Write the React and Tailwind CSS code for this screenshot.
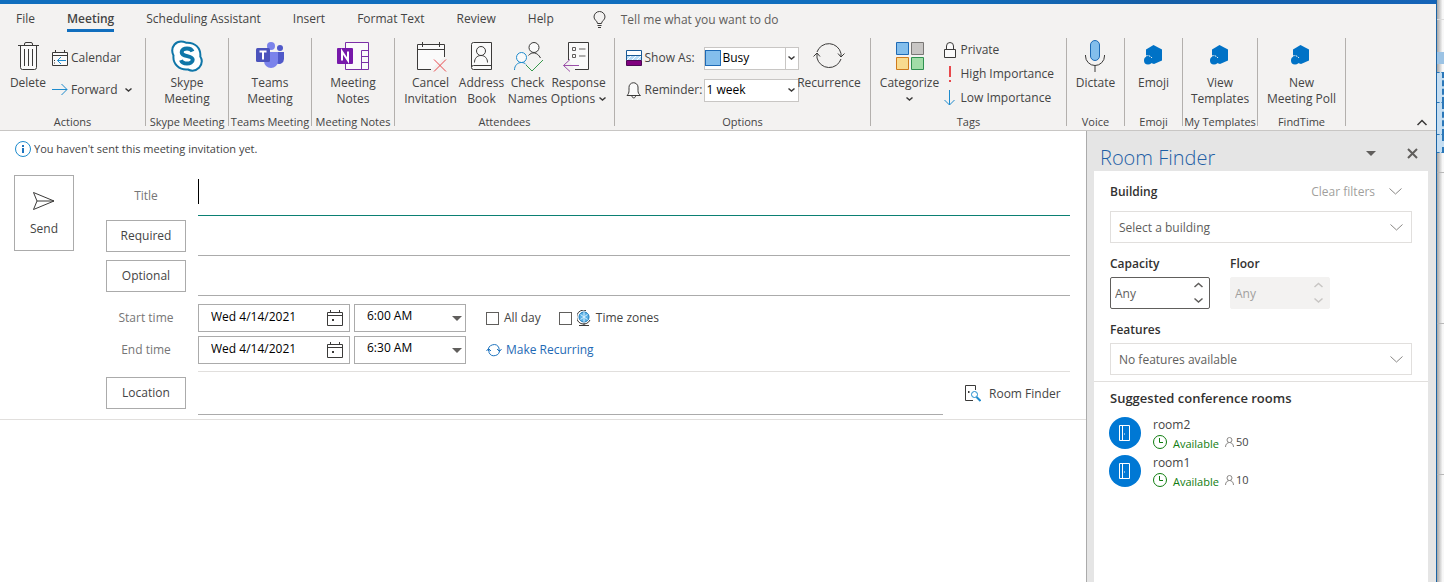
import React, { useState } from "react";

// ---------- icons ----------

function Svg({ w, h, className, children }) {
    return (
        <svg width={w} height={h} viewBox={`0 0 ${w} ${h}`} fill="none" stroke="#3b3a39" className={className} aria-hidden="true">
            {children}
        </svg>
    );
}

const TrashIcon = () => (
    <Svg w={32} h={32}>
        <path d="M8.500 6v21.500a2 2 0 0 0 2 2h12a2 2 0 0 0 2-2V6" fill="#fafafa" />
        <path d="M6 5.500h21M12.500 5V4a1.500 1.500 0 0 1 1.500-1.500h5A1.500 1.500 0 0 1 20.500 4v1M12.500 9v17M16.500 9v17M20.500 9v17" />
    </Svg>
);

const CalendarBackIcon = () => (
    <Svg w={16} h={16}>
        <path d="M.5 2.500h15v13H.5zM.5 5.500h15M3.500 0v3M12.500 0v3" fill="#fafafa" />
        <path d="M2 10.500h1M2 13h1" />
        <path d="M14 10.500H5.500M9 7l-3.500 3.500L9 14" stroke="#1e8bcd" />
    </Svg>
);

const ForwardIcon = () => (
    <Svg w={16} h={16}>
        <path d="M0 7.500h15M9.500 2l5.500 5.500L9.500 13" stroke="#1e8bcd" />
    </Svg>
);

const SkypeIcon = () => (
    <Svg w={32} h={32}>
        <path d="M10 1.500c2 0 3.500.5 5 1.200C24 2 30 8 29.300 16.500c2.500 4 1 8.500-1 11-3 3-7.500 4-11.300 2C8.500 30.500 1.500 24 2.500 15.500.8 12 1 7.500 3.500 4.500 5.300 2.500 7.500 1.500 10 1.500z" stroke="#0f76a8" strokeWidth="2" fill="#fff" />
        <path d="M21.500 11.500c-1-2.500-3-3-5.500-3-3 0-5.300 1.300-5.300 3.700 0 5.300 11 2.600 11 7.500 0 2.600-2.700 3.800-5.700 3.800-2.800 0-5.200-1-6-3.400" stroke="#0f76a8" strokeWidth="4" />
    </Svg>
);

const TeamsIcon = () => (
    <Svg w={32} h={32}>
        <g stroke="none">
            <circle cx="17" cy="6" r="4" fill="#7b83eb" />
            <circle cx="26" cy="8" r="3" fill="#5059c9" />
            <path d="M22 12h8v7a5 5 0 0 1-8 4z" fill="#5059c9" />
            <path d="M10 12h14v9a7 7 0 0 1-14 0z" fill="#7b83eb" />
            <path d="M2 9.500a1.500 1.500 0 0 1 1.500-1.500h11a1.500 1.500 0 0 1 1.500 1.500v11a1.500 1.500 0 0 1-1.500 1.500h-11A1.500 1.500 0 0 1 2 20.500z" fill="#4b53bc" />
        </g>
        <path d="M5.500 11.500h7M9 11.500v8" stroke="#fff" strokeWidth="2" />
    </Svg>
);

const OneNoteIcon = () => (
    <Svg w={32} h={32}>
        <path d="M8.500 2.500h23v27h-23zM24.500 29V10.500h7M24.500 16.500h7M24.500 22.500h7" stroke="#7b2fa6" fill="#fafafa" />
        <path d="M0 9a1 1 0 0 1 1-1h14a1 1 0 0 1 1 1v14a1 1 0 0 1-1 1H1a1 1 0 0 1-1-1z" fill="#7719aa" stroke="none" />
        <path d="M5 20.500v-9l6 9v-9" stroke="#fff" strokeWidth="2" />
    </Svg>
);

const CancelIcon = () => (
    <Svg w={32} h={32}>
        <path d="M16 29.500H2.500v-25h27V17" fill="#fafafa" />
        <path d="M2.500 9.500h27M7.500 2v5M24.500 2v5" />
        <path d="M19 19.500l12 12M31 19.500l-12 12" stroke="#e8484c" />
    </Svg>
);

const AddressBookIcon = () => (
    <Svg w={32} h={32}>
        <path d="M5.500 27V4.500a2 2 0 0 1 2-2h18v27h-18a2 2 0 0 1-2-2 2 2 0 0 1 2-2h18" fill="#fafafa" />
        <circle cx="15" cy="11" r="4.500" />
        <path d="M8.500 22.500c0-4 2.500-7 6.500-7s6.500 3 6.500 7" />
    </Svg>
);

const CheckNamesIcon = () => (
    <Svg w={32} h={32}>
        <circle cx="22" cy="7.500" r="5" fill="#fafafa" />
        <path d="M16.500 15.500c3-4 9-3.500 12 2.500" />
        <circle cx="9.500" cy="17.500" r="5" stroke="#1e8bcd" fill="#fafafa" />
        <path d="M2.500 30c0-4.500 3-7.500 7-7.500 2 0 3.500.7 4.500 2" stroke="#1e8bcd" />
        <path d="M14 25l6 6 11-11" stroke="#379a4d" />
    </Svg>
);

const ResponseIcon = () => (
    <Svg w={32} h={32}>
        <path d="M5.500 20V2.500h20v27H12" fill="#fafafa" />
        <path d="M9.500 7.500h3v3h-3zM9.500 14.500h3v3h-3zM16 9h6.500M16 16h6.500" stroke="#605e5c" />
        <path d="M16 25.500H.5M7 19.500l-6.500 6 6.500 6" stroke="#9a4fa8" />
    </Svg>
);

const ShowAsIcon = () => (
    <Svg w={16} h={16}>
        <path d="M.5.5h15v15H.5z" fill="#fff" stroke="none" />
        <path d="M0 5h16v6H0z" fill="#b9dcf6" stroke="none" />
        <path d="M1 10l4-4M6 10l4-4M11 10l4-4" stroke="#fff" />
        <path d="M.5 10V.5h15V10M0 5.500h16" stroke="#1a5a96" />
        <path d="M.5 10.500h15v5H.5z" fill="#80007f" stroke="#4b0a55" />
    </Svg>
);

const BellIcon = () => (
    <Svg w={16} h={18}>
        <path d="M1 14.500c1.500-1.500 2-3 2-5V6.500a4.500 4.500 0 0 1 9-.5v3.500c0 2 .5 3.500 2.500 5zM6 15c0 2.500 3.500 2.500 3.500 0" fill="#fafafa" />
    </Svg>
);

const RecurrenceIcon = () => (
    <Svg w={32} h={32}>
        <path d="M4 12a12.500 12.500 0 0 1 24 1.500V17M28 19A12.500 12.500 0 0 1 4 18v-5M.5 16.500L4 13l3 3.500M25 13.500l3 3.500 3.500-3.500" />
    </Svg>
);

const CategorizeIcon = () => (
    <Svg w={32} h={32}>
        <path d="M2.500 2.500h12v12h-12z" fill="#83beec" stroke="#1e6ab5" />
        <path d="M17.500 2.500h12v12h-12z" fill="#c8c6c4" stroke="#797775" />
        <path d="M2.500 17.500h12v12h-12z" fill="#f8db8f" stroke="#cf7a1c" />
        <path d="M17.500 17.500h12v12h-12z" fill="#a1dda7" stroke="#2f9150" />
    </Svg>
);

const LockIcon = () => (
    <Svg w={14} h={16}>
        <path d="M1.500 7.500h11v8h-11zM3.500 7V4a3.500 3.500 0 0 1 7 0v3" fill="#fafafa" />
    </Svg>
);

const HighIcon = () => (
    <Svg w={14} h={16}>
        <path d="M7 0v11M7 14v2" stroke="#e8484c" strokeWidth="2" />
    </Svg>
);

const LowIcon = () => (
    <Svg w={14} h={16}>
        <path d="M6.500 0v15M1.500 10l5 5 5-5" stroke="#1e8bcd" />
    </Svg>
);

const MicIcon = () => (
    <Svg w={32} h={32}>
        <rect x="11.500" y=".5" width="9" height="20" rx="4.500" fill="#83beec" stroke="#1e6ab5" />
        <path d="M6.500 15v1a9.500 9.500 0 0 0 19 0v-1M16 25.500V32" />
    </Svg>
);

const AddinIcon = () => (
    <Svg w={32} h={32}>
        <path d="M15.500 5l8.500 4.500v11L16 24l-3-1-5-5V9.500z" fill="#0072c6" stroke="none" />
        <circle cx="10" cy="20.500" r="4" fill="#0072c6" stroke="none" />
        <path d="M6 20a4 3 0 0 1 3-1" fill="#0072c6" stroke="none" />
        <path d="M7.500 16c3-1 5 0 6.500 2" stroke="#f3f2f1" strokeDasharray="2 1" />
    </Svg>
);

const BulbIcon = () => (
    <Svg w={14} h={18}>
        <path d="M4.500 12.500c0-2.500-3.500-3.500-3.500-6.500a5.500 5.500 0 0 1 11 0c0 3-3.500 4-3.500 6.500zM4.500 14.500h4M5 16.500h3" />
    </Svg>
);

const SendIcon = () => (
    <Svg w={24} h={20}>
        <path d="M1.500 1.500l20.500 8.500-20.500 8.500L5 10zM5 10h17" />
    </Svg>
);

const DateIcon = () => (
    <Svg w={16} h={16}>
        <path d="M.5 2.500h15v13H.5zM.5 5.500h15M3.500 0v3M12.500 0v3" />
        <path d="M5 10h2" strokeWidth="2" />
    </Svg>
);

const GlobeIcon = () => (
    <Svg w={14} h={16}>
        <circle cx="7" cy="7" r="5" fill="#5db3e8" stroke="#1b78b8" />
        <path d="M3.500 4.500l7 5M3.500 9.500l7-5M7 2v10" stroke="#d7effc" />
        <path d="M9 .5a7 7 0 1 0 4 9.500M7 13v2.500M2 15.500h10" />
    </Svg>
);

const RecurSmallIcon = () => (
    <Svg w={16} h={14}>
        <path d="M2.500 8A5.500 5.500 0 0 1 13 5v2.500M13.500 7A5.500 5.500 0 0 1 3 9.500V6.500M.5 8l2-2.500L5 8M11 6l2.500 2.500L15.500 6" stroke="#1e73be" />
    </Svg>
);

const FinderIcon = () => (
    <Svg w={16} h={17}>
        <path d="M8 15.500H.5V.5h10V5" />
        <path d="M3 7h1.500" strokeWidth="2" />
        <circle cx="9.500" cy="9.500" r="3" stroke="#1e8bcd" />
        <path d="M11.500 12l4 4" stroke="#1e8bcd" strokeWidth="2" />
    </Svg>
);

const InfoIcon = () => (
    <Svg w={16} h={16}>
        <circle cx="8" cy="8" r="7.500" stroke="#1e8bcd" />
        <path d="M8 4v2M8 7v5" stroke="#1e73be" strokeWidth="2" />
    </Svg>
);

const DoorIcon = () => (
    <Svg w={12} h={16}>
        <path d="M.5.5h10v15H.5zM3.500 1v14M5 9h1" stroke="#fff" />
    </Svg>
);

const ClockIcon = () => (
    <Svg w={14} h={14}>
        <path d="M7 .5a6.500 6.500 0 1 0 0 13 6.500 6.500 0 0 0 0-13zM6.500 3v4.500H10" stroke="#107c10" />
    </Svg>
);

const PersonIcon = () => (
    <Svg w={9} h={10}>
        <path d="M4.500.5a2.500 2.500 0 1 0 0 5 2.500 2.500 0 0 0 0-5zM.5 10c0-6 8-6 8 0" stroke="#8a8886" />
    </Svg>
);

function Chevron({ w = 7, h = 3, up, color = "#3b3a39", strokeWidth = 1.5 }) {
    return (
        <svg width={w} height={h + 1} viewBox={`0 0 ${w} ${h + 1}`} fill="none" stroke={color} strokeWidth={strokeWidth} className="overflow-visible" aria-hidden="true">
            <path d={up ? `M.5 ${h}L${w / 2} .5 ${w - 0.5} ${h}` : `M.5 .5L${w / 2} ${h} ${w - 0.5} .5`} />
        </svg>
    );
}

const Triangle = () => (
    <svg width="10" height="5" viewBox="0 0 10 5" fill="#605e5c" aria-hidden="true">
        <path d="M0 0h10L5 5z" />
    </svg>
);

// ---------- ribbon ----------

const tabs = ["File", "Meeting", "Scheduling Assistant", "Insert", "Format Text", "Review", "Help"];

function Tabs() {
    const [active, setActive] = useState("Meeting");

    return (
        <nav className="flex h-[34px] items-start gap-8 pl-4 text-[12px] text-[#444444]">
            {tabs.map((tab) => (
                <button
                    key={tab}
                    onClick={() => setActive(tab)}
                    className={`h-[28px] border-b-[3px] pt-[5px] leading-5 whitespace-nowrap ${tab === active ? "border-[#106ebe] font-semibold" : "border-transparent"}`}
                >
                    {tab}
                </button>
            ))}
            <button className="ml-[7px] flex h-[31px] items-center gap-[14px] whitespace-nowrap text-[#5f5d5b]">
                <BulbIcon />
                Tell me what you want to do
            </button>
        </nav>
    );
}

function Group({ name, className, children }) {
    return (
        <section aria-label={name} className={`flex h-[88px] shrink-0 flex-col border-r border-[#b3b0ad] ${className}`}>
            <div className="flex flex-1 justify-center">{children}</div>
            <div className="text-center text-[11px] leading-2 whitespace-nowrap">{name}</div>
        </section>
    );
}

function BigButton({ icon, lines, arrow, className = "" }) {
    return (
        <button className={`flex flex-col items-center self-start pt-[2px] leading-4 whitespace-nowrap ${className}`}>
            {icon}
            <span className="mt-[3px]">{lines[0]}</span>
            <span className="flex h-4 items-center gap-1">
                {lines[1]}
                {arrow && <Chevron />}
            </span>
        </button>
    );
}

function TagButton({ icon, text }) {
    return (
        <button className="flex h-6 items-center gap-1 whitespace-nowrap">
            {icon}
            {text}
        </button>
    );
}

function Ribbon() {
    return (
        <div className="flex h-[93px] items-start border-b border-[#c8c6c4] text-[12px] text-[#444444]">
            <Group name="Actions" className="w-[146px]">
                <BigButton icon={<TrashIcon />} lines={["Delete"]} className="w-[42px]" />
                <div className="flex w-[89px] flex-col pt-1 pl-[3px]">
                    <button className="flex h-8 items-center gap-[3px]">
                        <CalendarBackIcon />
                        Calendar
                    </button>
                    <button className="flex h-8 items-center gap-[3px]">
                        <ForwardIcon />
                        Forward
                        <span className="ml-1"><Chevron /></span>
                    </button>
                </div>
            </Group>
            <Group name="Skype Meeting" className="w-[83px]">
                <BigButton icon={<SkypeIcon />} lines={["Skype", "Meeting"]} />
            </Group>
            <Group name="Teams Meeting" className="w-[83px]">
                <BigButton icon={<TeamsIcon />} lines={["Teams", "Meeting"]} />
            </Group>
            <Group name="Meeting Notes" className="w-[83px]">
                <BigButton icon={<OneNoteIcon />} lines={["Meeting", "Notes"]} />
            </Group>
            <Group name="Attendees" className="w-[220px]">
                <BigButton icon={<CancelIcon />} lines={["Cancel", "Invitation"]} className="w-14" />
                <BigButton icon={<AddressBookIcon />} lines={["Address", "Book"]} className="w-[46px]" />
                <BigButton icon={<CheckNamesIcon />} lines={["Check", "Names"]} className="w-[46px]" />
                <BigButton icon={<ResponseIcon />} lines={["Response", "Options"]} arrow className="w-14" />
            </Group>
            <Group name="Options" className="w-[256px]">
                <div className="flex flex-col gap-2 pt-2">
                    <div className="flex h-6 items-center">
                        <label htmlFor="show-as" className="flex w-[78px] items-center gap-[3px] whitespace-nowrap">
                            <ShowAsIcon />
                            Show As:
                        </label>
                        <div className="flex h-[23px] w-[95px] items-center border border-[#c8c6c4] bg-white">
                            <span className="h-4 w-4 shrink-0 border border-[#1e6ab5] bg-[#83beec]" />
                            <select id="show-as" className="h-full w-[64px] appearance-none pl-[2px] text-black">
                                <option>Busy</option>
                                <option>Free</option>
                                <option>Tentative</option>
                            </select>
                            <span className="flex h-full flex-1 items-center justify-center border-l border-[#c8c6c4]">
                                <Chevron />
                            </span>
                        </div>
                    </div>
                    <div className="flex h-6 items-center">
                        <label htmlFor="reminder" className="flex w-[78px] items-center gap-[3px] whitespace-nowrap">
                            <BellIcon />
                            Reminder:
                        </label>
                        <div className="flex h-[23px] w-[95px] items-center border border-[#c8c6c4] bg-white">
                            <select id="reminder" className="h-full w-[80px] appearance-none pl-[2px] text-black">
                                <option>1 week</option>
                                <option>1 day</option>
                                <option>15 minutes</option>
                            </select>
                            <span className="flex flex-1 items-center justify-center">
                                <Chevron />
                            </span>
                        </div>
                    </div>
                </div>
                <BigButton icon={<RecurrenceIcon />} lines={["Recurrence"]} className="w-[61px]" />
            </Group>
            <Group name="Tags" className="w-[196px]">
                <BigButton icon={<CategorizeIcon />} lines={["Categorize"]} arrow className="w-[66px]" />
                <div className="flex w-[118px] flex-col">
                    <TagButton icon={<LockIcon />} text="Private" />
                    <TagButton icon={<HighIcon />} text="High Importance" />
                    <TagButton icon={<LowIcon />} text="Low Importance" />
                </div>
            </Group>
            <Group name="Voice" className="w-[58px]">
                <BigButton icon={<MicIcon />} lines={["Dictate"]} />
            </Group>
            <Group name="Emoji" className="w-[58px]">
                <BigButton icon={<AddinIcon />} lines={["Emoji"]} />
            </Group>
            <Group name="My Templates" className="w-[75px]">
                <BigButton icon={<AddinIcon />} lines={["View", "Templates"]} />
            </Group>
            <Group name="FindTime" className="w-[88px]">
                <BigButton icon={<AddinIcon />} lines={["New", "Meeting Poll"]} />
            </Group>
            <button aria-label="Collapse the ribbon" className="mr-[9px] mb-1 ml-auto self-end">
                <Chevron w={10} h={5} up />
            </button>
        </div>
    );
}

// ---------- meeting form ----------

const boxButton = "h-8 w-20 border border-[#ababab] text-[#444444]";

function TimeRow({ id, label, time, children }) {
    return (
        <div className="flex h-7 items-center gap-3">
            <label htmlFor={id} className="w-20 text-center text-[#767676]">{label}</label>
            <div className="flex h-full items-center gap-1">
                <div className="flex h-full w-[152px] items-center justify-between border border-[#ababab] pr-[6px] pl-3">
                    <input id={id} defaultValue="Wed 4/14/2021" className="h-full w-[100px] pb-1 text-black outline-none" />
                    <button aria-label={`Pick ${label.toLowerCase()}`}><DateIcon /></button>
                </div>
                <div className="flex h-full w-[112px] items-center border border-[#ababab] pr-[3px] pl-3">
                    <select aria-label={label} className="h-full flex-1 appearance-none pb-1 text-black outline-none">
                        <option>{time}</option>
                    </select>
                    <Triangle />
                </div>
            </div>
            <div className="flex items-center pl-2 text-[#444444]">{children}</div>
        </div>
    );
}

function Check({ id, children }) {
    return (
        <div className="flex items-center gap-[5px]">
            <input id={id} type="checkbox" className="h-[13px] w-[13px] appearance-none border border-[#605e5c] bg-white checked:bg-[#106ebe]" />
            <label htmlFor={id} className="flex items-center gap-[5px]">{children}</label>
        </div>
    );
}

function MeetingForm() {
    return (
        <main className="min-w-0 flex-1 bg-white text-[12px]">
            <div className="flex h-[44px] items-start gap-[3px] pt-[10px] pl-[15px] text-[11px] leading-4 text-[#444444]">
                <InfoIcon />
                You haven't sent this meeting invitation yet.
            </div>
            <form className="flex items-start gap-8 border-b border-[#e1dfdd] pr-4 pb-1 pl-[14px]" onSubmit={(e) => e.preventDefault()}>
                <button className="flex h-[76px] w-[60px] flex-col items-center justify-center gap-2 border border-[#ababab] pt-1 leading-5 text-[#444444]">
                    <SendIcon />
                    Send
                </button>
                <div className="flex-1">
                    <div className="flex h-[41px] gap-3">
                        <label htmlFor="title" className="w-20 text-center leading-[41px] text-[#767676]">Title</label>
                        <div className="flex flex-1 border-b border-[#0b8073]">
                            <span className="mt-1 h-[25px] w-px bg-black" />
                            <input id="title" className="flex-1 outline-none" />
                        </div>
                    </div>
                    <div className="flex h-10 items-center gap-3">
                        <button type="button" className={boxButton}>Required</button>
                        <input aria-label="Required" className="h-full flex-1 border-b border-[#ababab] outline-none" />
                    </div>
                    <div className="flex h-10 items-center gap-3">
                        <button type="button" className={boxButton}>Optional</button>
                        <input aria-label="Optional" className="h-full flex-1 border-b border-[#ababab] outline-none" />
                    </div>
                    <div className="flex flex-col gap-1 pt-2 pb-[7px]">
                        <TimeRow id="start" label="Start time" time="6:00 AM">
                            <Check id="all-day">All day</Check>
                            <div className="ml-[18px]">
                                <Check id="zones">
                                    <GlobeIcon />
                                    Time zones
                                </Check>
                            </div>
                        </TimeRow>
                        <TimeRow id="end" label="End time" time="6:30 AM">
                            <a href="#recurring" className="flex items-center gap-1 text-[#1e6ab5]">
                                <RecurSmallIcon />
                                Make Recurring
                            </a>
                        </TimeRow>
                    </div>
                    <div className="flex h-[44px] items-center gap-3">
                        <button type="button" className={boxButton}>Location</button>
                        <div className="flex h-full flex-1 items-center border-t border-[#e1dfdd]">
                            <input aria-label="Location" className="h-full flex-1 border-b border-[#ababab] outline-none" />
                            <button type="button" className="flex w-[127px] items-center gap-2 pl-[22px] whitespace-nowrap text-[#444444]">
                                <FinderIcon />
                                Room Finder
                            </button>
                        </div>
                    </div>
                </div>
            </form>
        </main>
    );
}

// ---------- room finder ----------

const rooms = [
    { name: "room2", status: "Available", seats: 50 },
    { name: "room1", status: "Available", seats: 10 },
];

function PanelSelect({ id, text }) {
    return (
        <div className="flex h-8 items-center border border-[#e1dfdd] pr-2">
            <select id={id} className="h-full flex-1 appearance-none pt-[2px] pl-2 text-[#605e5c] outline-none">
                <option>{text}</option>
            </select>
            <Chevron w={13} h={6} color="#8a8886" strokeWidth={1} />
        </div>
    );
}

function Stepper({ id, label, disabled }) {
    const color = disabled ? "#c8c6c4" : "#605e5c";

    return (
        <div className="flex w-[100px] flex-col">
            <label htmlFor={id} className="h-[21px] font-semibold text-[#323130]">{label}</label>
            <div className={`flex h-8 items-center rounded-xs border pr-[6px] pl-1 ${disabled ? "border-[#f3f2f1] bg-[#f3f2f1]" : "border-[#605e5c]"}`}>
                <input
                    id={id}
                    defaultValue="Any"
                    disabled={disabled}
                    className={`w-0 flex-1 pt-[2px] outline-none ${disabled ? "text-[#a19f9d]" : "text-[#605e5c]"}`}
                />
                <div className="flex flex-col gap-[10px]">
                    <button disabled={disabled} aria-label={`Raise ${label.toLowerCase()}`}><Chevron up w={9} h={4} color={color} /></button>
                    <button disabled={disabled} aria-label={`Lower ${label.toLowerCase()}`}><Chevron w={9} h={4} color={color} /></button>
                </div>
            </div>
        </div>
    );
}

function RoomFinder() {
    return (
        <aside className="flex w-[350px] shrink-0 flex-col border-l border-[#ababab] bg-[#e5e5e5] pr-2 pl-[7px] text-[12px]">
            <header className="flex h-10 items-center pr-[10px] pl-[6px]">
                <h2 className="flex-1 pt-[14px] text-[20px] leading-6 font-light text-[#1f5fa5]">Room Finder</h2>
                <button aria-label="Panel options" className="mr-[31px] pt-1"><Triangle /></button>
                <button aria-label="Close" className="pt-1">
                    <Svg w={11} h={11}>
                        <path d="M1 1l9 9M10 1l-9 9" stroke="#605e5c" strokeWidth="2" />
                    </Svg>
                </button>
            </header>
            <div className="flex-1 bg-white">
                <div className="border-b border-[#e1dfdd] px-4 pt-[13px] pb-[6px] leading-4">
                    <div className="flex h-[27px] items-start">
                        <label htmlFor="building" className="flex-1 font-semibold text-[#323130]">Building</label>
                        <button className="text-[#a19f9d]">Clear filters</button>
                        <button aria-label="Collapse filters" className="mr-[10px] ml-[14px] self-start pt-1">
                            <Chevron w={13} h={6} color="#8a8886" strokeWidth={1} />
                        </button>
                    </div>
                    <PanelSelect id="building" text="Select a building" />
                    <div className="flex gap-5 pt-[13px]">
                        <Stepper id="capacity" label="Capacity" />
                        <Stepper id="floor" label="Floor" disabled />
                    </div>
                    <label htmlFor="features" className="mt-[13px] block h-[21px] font-semibold text-[#323130]">Features</label>
                    <PanelSelect id="features" text="No features available" />
                </div>
                <h3 className="px-4 pt-2 text-[13px] leading-4 font-semibold text-[#323130]">Suggested conference rooms</h3>
                <ul className="pt-[11px] pl-[15px]">
                    {rooms.map((room) => (
                        <li key={room.name} className="flex h-[38px] items-start gap-3">
                            <span className="flex h-8 w-8 items-center justify-center rounded-full bg-[#0078d4]">
                                <DoorIcon />
                            </span>
                            <div className="leading-4 text-[#444444]">
                                <div className="leading-[15px]">{room.name}</div>
                                <div className="flex h-5 items-center gap-[6px] text-[11px]">
                                    <ClockIcon />
                                    <span className="pt-1 text-[#107c10]">{room.status}</span>
                                    <span className="flex items-center gap-[2px]">
                                        <PersonIcon />
                                        {room.seats}
                                    </span>
                                </div>
                            </div>
                        </li>
                    ))}
                </ul>
            </div>
        </aside>
    );
}

// Sliver of the calendar window that shows past the right edge
function CalendarEdge() {
    return (
        <div className="flex w-[7px] flex-col bg-linear-to-r from-[#a6a6a6] to-[#f8f8f8] to-80%">
            <div className="h-5 border-b border-[#dcdcdc]" />
            <div className="mt-8 h-3 bg-[#9cc3e4]" />
            <div className="mt-2 h-[31px] border-y border-r-2 border-dashed border-[#2b78b9] bg-[#c5def2]" />
            <div className="h-8 border-b border-r-2 border-dashed border-[#2b78b9] bg-[#c5def2]" />
            <div className="h-[18px] border-r-2 border-b border-dashed border-[#2b78b9] bg-[#c5def2]" />
            <div className="h-5 border-b border-[#b8b8b8]" />
            <div className="h-[151px] border-b border-[#b8b8b8]" />
            <div className="h-[151px] border-b border-[#b8b8b8]" />
        </div>
    );
}

export default function App() {
    return (
        <div className="flex min-h-screen bg-white font-['Open_Sans',sans-serif]">
            <div className="flex min-w-0 flex-1 flex-col border-r border-[#1b64a5]">
                <div className="h-1 bg-linear-to-r from-[#106ebe] from-65% via-[#155fa8] via-80% to-[#1464b8]" />
                <div className="bg-[#f3f2f1]">
                    <Tabs />
                    <Ribbon />
                </div>
                <div className="flex flex-1">
                    <MeetingForm />
                    <RoomFinder />
                </div>
            </div>
            <CalendarEdge />
        </div>
    );
}
